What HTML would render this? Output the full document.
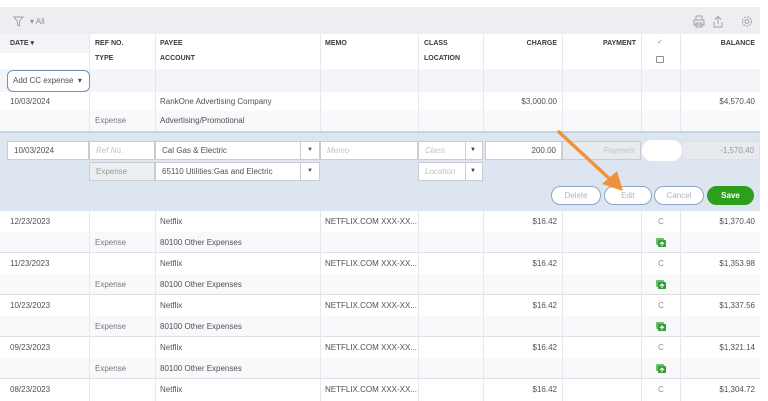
<!DOCTYPE html><html><head><style>
body{margin:0;width:768px;height:401px;overflow:hidden;background:#fff;font-family:"Liberation Sans",sans-serif;font-size:8px;color:#505156;position:relative}
div{position:absolute;box-sizing:border-box}
.t{white-space:nowrap;line-height:10px}
.r{text-align:right}
.h{font-weight:bold;font-size:7px;color:#393a3d}
.vl{width:1px;background:#e6e8eb}
.in{background:#fff;border:1px solid #c9ccd1;height:19px;line-height:17px;padding-left:6px;color:#505156;font-size:8px}
.ph{color:#c0c3c8;font-style:italic}
.btn{height:19px;border:1px solid #8aa7c4;border-radius:10px;background:#fff;color:#b0b4ba;text-align:center;line-height:17px;font-size:8px}
</style></head><body>
<div style="left:0;top:7px;width:760px;height:27px;background:#eceef1"></div>
<div style="left:0;top:34px;width:89px;height:19px;background:#f4f5f8"></div>
<div style="left:0;top:69px;width:760px;height:23px;background:#f4f5f8"></div>
<div style="left:0;top:111px;width:760px;height:20px;background:#f8f9fa"></div>
<div style="left:0;top:131px;width:760px;height:80px;background:#dde6f0;border-top:2px solid #c8d4e2"></div>
<div style="left:0;top:232px;width:760px;height:21px;background:#f8f9fa;border-bottom:1px solid #dcdfe3"></div>
<div style="left:0;top:274px;width:760px;height:21px;background:#f8f9fa;border-bottom:1px solid #dcdfe3"></div>
<div style="left:0;top:316px;width:760px;height:21px;background:#f8f9fa;border-bottom:1px solid #dcdfe3"></div>
<div style="left:0;top:358px;width:760px;height:21px;background:#f8f9fa;border-bottom:1px solid #dcdfe3"></div>
<div class="vl" style="left:89px;top:34px;height:97px"></div>
<div class="vl" style="left:155px;top:34px;height:97px"></div>
<div class="vl" style="left:320px;top:34px;height:97px"></div>
<div class="vl" style="left:418px;top:34px;height:97px"></div>
<div class="vl" style="left:483px;top:34px;height:97px"></div>
<div class="vl" style="left:562px;top:34px;height:97px"></div>
<div class="vl" style="left:641px;top:34px;height:97px"></div>
<div class="vl" style="left:680px;top:34px;height:97px"></div>
<div class="vl" style="left:89px;top:211px;height:190px"></div>
<div class="vl" style="left:155px;top:211px;height:190px"></div>
<div class="vl" style="left:320px;top:211px;height:190px"></div>
<div class="vl" style="left:418px;top:211px;height:190px"></div>
<div class="vl" style="left:483px;top:211px;height:190px"></div>
<div class="vl" style="left:562px;top:211px;height:190px"></div>
<div class="vl" style="left:641px;top:211px;height:190px"></div>
<div class="vl" style="left:680px;top:211px;height:190px"></div>
<svg style="position:absolute;left:13px;top:16px" width="11" height="11" viewBox="0 0 11 11"><path d="M1 1h9L6.5 5.5V10L4.5 9V5.5Z" fill="none" stroke="#9a9da3" stroke-width="0.9"/></svg>
<div class="t" style="left:30px;top:17px;color:#8d9096">▾ All</div>
<svg style="position:absolute;left:693px;top:15px" width="60" height="13" viewBox="0 0 60 13" fill="none" stroke="#a0a3a8" stroke-width="1"><rect x="1" y="5" width="10" height="5"/><rect x="3" y="1" width="6" height="4"/><rect x="3" y="8" width="6" height="4"/><path d="M25 2v7M22 4.5l3-3 3 3M21 7v5h8V7"/><circle cx="54" cy="6.5" r="2"/><circle cx="54" cy="6.5" r="4.5" stroke-dasharray="2 1"/></svg>
<div class="t h" style="left:10px;top:39px">DATE ▾</div>
<div class="t h" style="left:95px;top:39px">REF NO.</div>
<div class="t h" style="left:95px;top:54px">TYPE</div>
<div class="t h" style="left:160px;top:39px">PAYEE</div>
<div class="t h" style="left:160px;top:54px">ACCOUNT</div>
<div class="t h" style="left:325px;top:39px">MEMO</div>
<div class="t h" style="left:424px;top:39px">CLASS</div>
<div class="t h" style="left:424px;top:54px">LOCATION</div>
<div class="t h r" style="left:483px;top:39px;width:74px">CHARGE</div>
<div class="t h r" style="left:562px;top:39px;width:74px">PAYMENT</div>
<div class="t" style="left:657px;top:38px;color:#888;font-size:7px">✓</div>
<div style="left:656px;top:56px;width:8px;height:7px;border:1.5px solid #8d9096;border-radius:1px"></div>
<div class="t h r" style="left:680px;top:39px;width:75px">BALANCE</div>
<div style="left:7px;top:70px;width:83px;height:22px;border:1px solid #6d94bd;border-radius:6px;background:#fff;line-height:20px;padding-left:5px;font-size:8px" class="t">Add CC expense&nbsp; ▾</div>
<div class="t" style="left:10px;top:97px">10/03/2024</div>
<div class="t" style="left:160px;top:97px">RankOne Advertising Company</div>
<div class="t r" style="left:483px;top:97px;width:74px">$3,000.00</div>
<div class="t r" style="left:680px;top:97px;width:75px">$4,570.40</div>
<div class="t" style="left:95px;top:116px;color:#77787d">Expense</div>
<div class="t" style="left:160px;top:116px">Advertising/Promotional</div>
<div class="in" style="left:7px;top:141px;width:82px">10/03/2024</div>
<div class="in ph" style="left:89px;top:141px;width:66px">Ref No.</div>
<div class="in" style="left:155px;top:141px;width:165px">Cal Gas &amp; Electric<span style="position:absolute;right:6px;font-size:6px">▼</span></div>
<div style="left:300px;top:141px;width:1px;height:19px;background:#c9ccd1"></div>
<div class="in ph" style="left:320px;top:141px;width:98px">Memo</div>
<div class="in ph" style="left:418px;top:141px;width:65px">Class<span style="position:absolute;right:6px;font-size:6px;color:#393a3d;font-style:normal">▼</span></div>
<div style="left:465px;top:141px;width:1px;height:19px;background:#c9ccd1"></div>
<div class="in r" style="left:485px;top:141px;width:77px;padding-right:5px">200.00</div>
<div class="in ph r" style="left:562px;top:141px;width:79px;background:#e7eaee;padding-right:5px">Payment</div>
<div style="left:642px;top:140px;width:40px;height:21px;background:#fff;border-radius:10px"></div>
<div class="in r" style="left:682px;top:141px;width:78px;background:#e7eaee;color:#999;padding-right:5px;border-color:#dde0e4">-1,570.40</div>
<div class="in" style="left:89px;top:162px;width:66px;background:#eceef1;color:#999">Expense</div>
<div class="in" style="left:155px;top:162px;width:165px">65110 Utilities:Gas and Electric<span style="position:absolute;right:6px;font-size:6px">▼</span></div>
<div style="left:300px;top:162px;width:1px;height:19px;background:#c9ccd1"></div>
<div class="in ph" style="left:418px;top:162px;width:65px">Location<span style="position:absolute;right:6px;font-size:6px;color:#393a3d;font-style:normal">▼</span></div>
<div style="left:465px;top:162px;width:1px;height:19px;background:#c9ccd1"></div>
<div class="btn" style="left:551px;top:186px;width:50px">Delete</div>
<div class="btn" style="left:604px;top:186px;width:48px">Edit</div>
<div class="btn" style="left:654px;top:186px;width:50px">Cancel</div>
<div class="btn" style="left:707px;top:186px;width:47px;background:#2ca01c;border-color:#2ca01c;color:#fff;font-weight:bold">Save</div>
<svg style="position:absolute;left:555px;top:128px" width="80" height="70" viewBox="0 0 80 70"><path d="M4 4L58 54" stroke="#f0923a" stroke-width="3.5" stroke-linecap="round"/><path d="M47 56L68 63L62 43Z" fill="#f0923a"/></svg>
<div class="t" style="left:10px;top:217px">12/23/2023</div>
<div class="t" style="left:10px;top:259px">11/23/2023</div>
<div class="t" style="left:10px;top:301px">10/23/2023</div>
<div class="t" style="left:10px;top:343px">09/23/2023</div>
<div class="t" style="left:10px;top:385px">08/23/2023</div>
<div class="t" style="left:160px;top:217px">Netflix</div><div class="t" style="left:160px;top:259px">Netflix</div><div class="t" style="left:160px;top:301px">Netflix</div><div class="t" style="left:160px;top:343px">Netflix</div><div class="t" style="left:160px;top:385px">Netflix</div>
<div class="t" style="left:325px;top:217px">NETFLIX.COM XXX-XX...</div><div class="t" style="left:325px;top:259px">NETFLIX.COM XXX-XX...</div><div class="t" style="left:325px;top:301px">NETFLIX.COM XXX-XX...</div><div class="t" style="left:325px;top:343px">NETFLIX.COM XXX-XX...</div><div class="t" style="left:325px;top:385px">NETFLIX.COM XXX-XX...</div>
<div class="t r" style="left:483px;top:217px;width:74px">$16.42</div><div class="t r" style="left:483px;top:259px;width:74px">$16.42</div><div class="t r" style="left:483px;top:301px;width:74px">$16.42</div><div class="t r" style="left:483px;top:343px;width:74px">$16.42</div><div class="t r" style="left:483px;top:385px;width:74px">$16.42</div>
<div class="t" style="left:658px;top:217px;color:#888">C</div><div class="t" style="left:658px;top:259px;color:#888">C</div><div class="t" style="left:658px;top:301px;color:#888">C</div><div class="t" style="left:658px;top:343px;color:#888">C</div><div class="t" style="left:658px;top:385px;color:#888">C</div>
<div class="t r" style="left:680px;top:217px;width:75px">$1,370.40</div><div class="t r" style="left:680px;top:259px;width:75px">$1,353.98</div><div class="t r" style="left:680px;top:301px;width:75px">$1,337.56</div><div class="t r" style="left:680px;top:343px;width:75px">$1,321.14</div><div class="t r" style="left:680px;top:385px;width:75px">$1,304.72</div>
<div class="t" style="left:95px;top:238px;color:#77787d">Expense</div><div class="t" style="left:95px;top:280px;color:#77787d">Expense</div><div class="t" style="left:95px;top:322px;color:#77787d">Expense</div><div class="t" style="left:95px;top:364px;color:#77787d">Expense</div>
<div class="t" style="left:160px;top:238px">80100 Other Expenses</div><div class="t" style="left:160px;top:280px">80100 Other Expenses</div><div class="t" style="left:160px;top:322px">80100 Other Expenses</div><div class="t" style="left:160px;top:364px">80100 Other Expenses</div>
<svg style="position:absolute;left:655px;top:237px" width="12" height="11" viewBox="0 0 12 11"><rect x="1" y="1" width="8" height="7" rx="1" fill="#6cc06c"/><rect x="3" y="3" width="8" height="7" rx="1" fill="#3a9a3a"/><path d="M7 9V5M5 7l2-2 2 2" stroke="#fff" stroke-width="1" fill="none"/></svg>
<svg style="position:absolute;left:655px;top:279px" width="12" height="11" viewBox="0 0 12 11"><rect x="1" y="1" width="8" height="7" rx="1" fill="#6cc06c"/><rect x="3" y="3" width="8" height="7" rx="1" fill="#3a9a3a"/><path d="M7 9V5M5 7l2-2 2 2" stroke="#fff" stroke-width="1" fill="none"/></svg>
<svg style="position:absolute;left:655px;top:321px" width="12" height="11" viewBox="0 0 12 11"><rect x="1" y="1" width="8" height="7" rx="1" fill="#6cc06c"/><rect x="3" y="3" width="8" height="7" rx="1" fill="#3a9a3a"/><path d="M7 9V5M5 7l2-2 2 2" stroke="#fff" stroke-width="1" fill="none"/></svg>
<svg style="position:absolute;left:655px;top:363px" width="12" height="11" viewBox="0 0 12 11"><rect x="1" y="1" width="8" height="7" rx="1" fill="#6cc06c"/><rect x="3" y="3" width="8" height="7" rx="1" fill="#3a9a3a"/><path d="M7 9V5M5 7l2-2 2 2" stroke="#fff" stroke-width="1" fill="none"/></svg>
</body></html>
